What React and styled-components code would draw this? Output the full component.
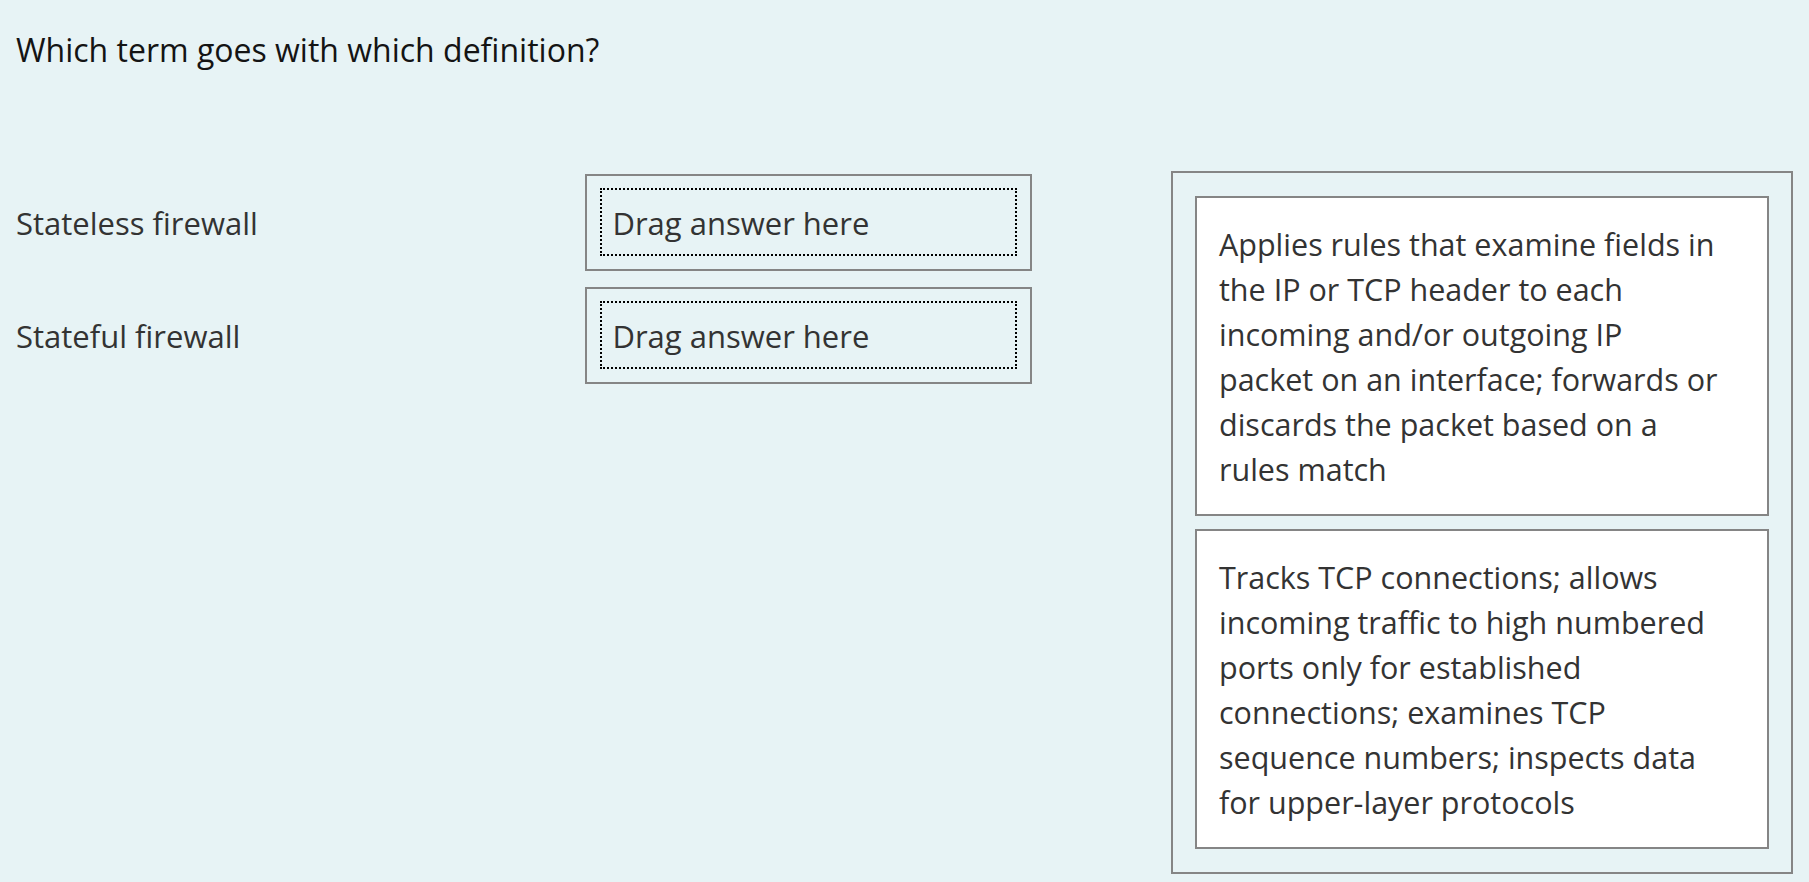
import React from "react";
import styled, { createGlobalStyle } from "styled-components";

const Global = createGlobalStyle`
  html, body {
    margin: 0;
    padding: 0;
    background: #e7f3f5;
  }
  body {
    font-family: "Open Sans", "Noto Sans", "Liberation Sans", sans-serif;
    color: #333333;
  }
`;

const Page = styled.div`
  min-height: 882px;
  box-sizing: border-box;
  padding: 27px 16px 0 16px;
  background: #e7f3f5;
`;

const Question = styled.h1`
  margin: 0;
  font-size: 32px;
  font-weight: 400;
  line-height: 45px;
  color: #141414;
`;

const Board = styled.div`
  display: flex;
  align-items: flex-start;
  margin-top: 99px;
`;

const Pairs = styled.div`
  display: flex;
  flex-direction: column;
  gap: 16px;
  margin-top: 3px;
  width: 1016px;
`;

const PairRow = styled.div`
  display: flex;
  align-items: center;
`;

const Term = styled.div`
  width: 570px;
  font-size: 31px;
  line-height: 40px;
  color: #333;
`;

const DropZone = styled.div`
  box-sizing: border-box;
  width: 447px;
  height: 97px;
  border: 2px solid #858585;
  padding: 12px 13px 13px 13px;
`;

const DropInner = styled.div`
  box-sizing: border-box;
  height: 100%;
  border: 2px dotted #000;
  display: flex;
  align-items: center;
  padding: 2px 10px 0 10px;
  font-size: 31px;
  color: #333;
`;

const Bank = styled.div`
  box-sizing: border-box;
  margin-left: 139px;
  width: 622px;
  border: 2px solid #858585;
  padding: 23px 22px 23px 22px;
  display: flex;
  flex-direction: column;
  gap: 13px;
`;

const AnswerCard = styled.div`
  box-sizing: border-box;
  background: #ffffff;
  border: 2px solid #858585;
  padding: 24px 22px 22px 22px;
  font-size: 30.5px;
  line-height: 45px;
  color: #333;
  white-space: pre-line;
`;

const terms = ["Stateless firewall", "Stateful firewall"];

const answers = [
  "Applies rules that examine fields in\nthe IP or TCP header to each\nincoming and/or outgoing IP\npacket on an interface; forwards or\ndiscards the packet based on a\nrules match",
  "Tracks TCP connections; allows\nincoming traffic to high numbered\nports only for established\nconnections; examines TCP\nsequence numbers; inspects data\nfor upper-layer protocols",
];

export default function App() {
  return (
    <Page>
      <Global />
      <Question>Which term goes with which definition?</Question>
      <Board>
        <Pairs>
          {terms.map((t) => (
            <PairRow key={t}>
              <Term>{t}</Term>
              <DropZone>
                <DropInner>Drag answer here</DropInner>
              </DropZone>
            </PairRow>
          ))}
        </Pairs>
        <Bank>
          {answers.map((a, i) => (
            <AnswerCard key={i}>{a}</AnswerCard>
          ))}
        </Bank>
      </Board>
    </Page>
  );
}
